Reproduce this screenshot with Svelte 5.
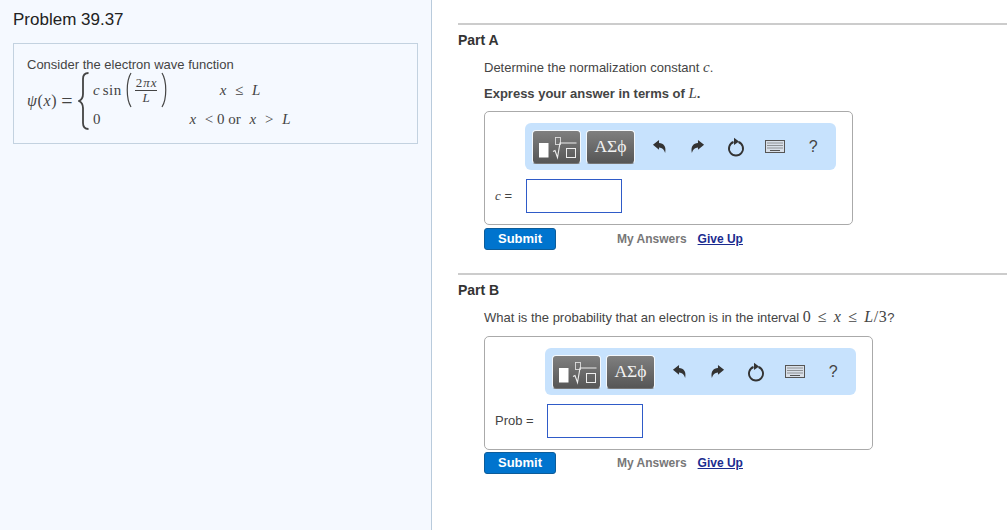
<script>
  const parts = [
    { name: 'Part A', label: 'c', italic: true, variant: 'part-a' },
    { name: 'Part B', label: 'Prob', italic: false, variant: 'part-b' }
  ];
</script>

{#snippet toolbar()}
  <div class="toolbar">
    <div class="tool-btn">
      <svg width="47" height="32" viewBox="0 0 47 32" fill="none">
        <rect x="6" y="12" width="9.5" height="14.5" fill="#fff" />
        <rect x="22.5" y="6.5" width="5" height="7" stroke="#ddd" stroke-width="0.9" />
        <path d="M20 20.5l2 -1 2.5 7 2.5 -14.5h16.5" stroke="#eee" stroke-width="1.1" />
        <rect x="33.5" y="17.5" width="9" height="9" stroke="#eee" />
      </svg>
    </div>
    <div class="tool-btn greek">ΑΣϕ</div>
    <div class="tool-icons">
      <svg width="15" height="15" viewBox="0 0 16 16">
        <path d="M1 6.2L7.5 1V4.2C12.5 4.5 15.5 8 14 15C13 11 11 9.2 7.5 9V11.5Z" fill="#333" />
      </svg>
      <svg width="15" height="15" viewBox="0 0 16 16">
        <path d="M15 6.2L8.5 1V4.2C3.5 4.5 0.5 8 2 15C3 11 5 9.2 8.5 9V11.5Z" fill="#333" />
      </svg>
      <svg width="18" height="20" viewBox="0 0 18 20" fill="none">
        <path d="M11.5 5A7 7 0 1 1 6.5 5" stroke="#333" stroke-width="1.9" />
        <path d="M7 0.8L12 4.4L7 8Z" fill="#333" />
      </svg>
      <svg width="20" height="13" viewBox="0 0 20 13">
        <rect x="0.5" y="0.5" width="19" height="12" fill="#d8dfe8" stroke="#555" />
        <path d="M2.5 3h15M2.5 5.5h15M2.5 8h15" stroke="#444" stroke-dasharray="1 1" />
        <path d="M5 10.5h10" stroke="#555" />
      </svg>
      <span class="help">?</span>
    </div>
  </div>
{/snippet}

<div class="page">
  <aside class="side">
    <h1>Problem 39.37</h1>
    <div class="intro">
      <p>Consider the electron wave function</p>
      <div class="math equation">
        <span class="lhs"><i>ψ</i>(<i>x</i>)<span class="eq">=</span></span>
        <svg class="brace" width="11" height="58" viewBox="0 0 11 58" fill="none">
          <path d="M10.5 1C6.5 1 5 3 5 7V22C5 26 3 28 1 29C3 30 5 32 5 36V51C5 55 6.5 57 10.5 57" stroke="#444" stroke-width="1.8" />
        </svg>
        <div class="cases">
          <div class="expr">
            <i>c</i><span class="sin">sin</span>
            <svg class="paren" width="8" height="36" viewBox="0 0 8 36" fill="none">
              <path d="M7 1C2 9 2 27 7 35" stroke="#444" stroke-width="1.2" />
            </svg>
            <span class="frac"><span class="num">2<i>πx</i></span><span class="den"><i>L</i></span></span>
            <svg class="paren" width="8" height="36" viewBox="0 0 8 36" fill="none">
              <path d="M1 1C6 9 6 27 1 35" stroke="#444" stroke-width="1.2" />
            </svg>
          </div>
          <div class="cond"><i>x</i> ≤ <i>L</i></div>
          <div class="zero">0</div>
          <div class="cond"><i>x</i> &lt; 0 or <i>x</i> &gt; <i>L</i></div>
        </div>
      </div>
    </div>
  </aside>

  <main class="main">
    {#each parts as part, i}
      <section class="part {part.variant}">
        <h2>{part.name}</h2>
        <div class="body">
          {#if i === 0}
            <p class="question">Determine the normalization constant <span class="math inline"><i>c</i></span>.</p>
            <p class="hint">Express your answer in terms of <span class="math inline"><i>L</i></span>.</p>
          {:else}
            <p class="question">What is the probability that an electron is in the interval <span class="math inline wide">0 ≤ <i>x</i> ≤ <i>L</i>/3</span>?</p>
          {/if}
          <div class="answer">
            {@render toolbar()}
            <div class="entry">
              <label for="answer-{i}">{#if part.italic}<i class="math">{part.label}</i>{:else}{part.label}{/if} =</label>
              <input id="answer-{i}" type="text" />
            </div>
          </div>
          <div class="actions">
            <button class="submit">Submit</button>
            <span class="my-answers">My Answers</span>
            <a href="#give-up" class="give-up">Give Up</a>
          </div>
        </div>
      </section>
    {/each}
  </main>
</div>

<style>
  :global(body) {
    margin: 0;
    background: #fff;
  }

  .page {
    display: flex;
    height: 530px;
    overflow: hidden;
    font-family: "Liberation Sans", Arial, sans-serif;
    font-size: 13px;
    color: #444;
  }

  .side {
    width: 432px;
    flex: none;
    box-sizing: border-box;
    padding: 11px 13px 0;
    background: #f5f9ff;
    border-right: 1px solid #b9cbdc;
  }

  h1 {
    margin: 0 0 15px;
    font-size: 17px;
    line-height: 17px;
    font-weight: normal;
    color: #222;
  }

  .intro {
    width: 405px;
    height: 101px;
    box-sizing: border-box;
    padding: 14px 13px 0;
    border: 1px solid #c3d2e0;
  }

  .intro p {
    margin: 0;
    line-height: 14px;
  }

  .math {
    font-family: "Liberation Serif", "Times New Roman", serif;
  }

  .equation {
    display: flex;
    align-items: center;
    font-size: 15px;
  }

  .lhs {
    display: flex;
    align-items: center;
    width: 51px;
    flex: none;
    white-space: nowrap;
    margin-top: -1px;
    font-size: 16px;
    letter-spacing: 0.6px;
  }

  .eq {
    margin-left: 4px;
    font-size: 20px;
    line-height: 1;
  }

  .brace {
    flex: none;
  }

  .cases {
    display: grid;
    grid-template-columns: 96px 102px;
    margin-left: 4px;
  }

  .expr {
    display: flex;
    align-items: center;
    height: 36px;
  }

  .sin {
    margin: 0 2px 0 3px;
    letter-spacing: 0.5px;
  }

  .frac {
    display: inline-flex;
    flex-direction: column;
    align-items: center;
    margin: 0 4px 0 3px;
    font-size: 13px;
    line-height: 12px;
  }

  .num {
    padding: 0 0 1px 1px;
    letter-spacing: 1px;
    border-bottom: 1px solid #444;
  }

  .den {
    padding-top: 1px;
  }

  .cond {
    display: flex;
    align-items: center;
    justify-content: center;
    gap: 5px;
    font-size: 15px;
    white-space: pre;
  }

  .zero {
    line-height: 22px;
  }

  .main {
    flex: 1;
    padding: 23px 0 0 26px;
  }

  .part {
    border-top: 2px solid #ccc;
  }

  h2 {
    margin: 0;
    padding-top: 7px;
    font-size: 14px;
    line-height: 16px;
    font-weight: bold;
    color: #333;
  }

  .body {
    padding-left: 26px;
  }

  .question {
    margin: 12px 0 0;
    font-size: 13px;
    line-height: 16px;
  }

  .part-b .question {
    margin-top: 11px;
  }

  .inline {
    font-size: 15px;
    line-height: 1;
    font-weight: normal;
  }

  .wide {
    font-size: 16px;
    word-spacing: 2px;
    letter-spacing: 0.6px;
  }

  .hint {
    margin: 10px 0 0;
    font-size: 13px;
    line-height: 16px;
    font-weight: bold;
  }

  .answer {
    box-sizing: border-box;
    height: 114px;
    margin-top: 9px;
    padding-top: 11px;
    border: 1px solid #aaa;
    border-radius: 5px;
    background: #fff;
  }

  .part-a .answer {
    width: 369px;
  }

  .part-b .answer {
    width: 389px;
    margin-top: 10px;
  }

  .toolbar {
    display: flex;
    align-items: center;
    width: 311px;
    height: 47px;
    box-sizing: border-box;
    margin-left: auto;
    margin-right: 16px;
    padding-left: 7px;
    gap: 5px;
    background: #c7e2fd;
    border-radius: 6px;
  }

  .tool-btn {
    display: flex;
    flex: none;
    align-items: center;
    justify-content: center;
    width: 49px;
    height: 34px;
    box-sizing: border-box;
    border: 1px solid #f4f8fc;
    border-bottom-color: #777;
    border-radius: 4px;
    background: linear-gradient(#7f7f7f, #565656);
  }

  .greek {
    font-family: "Liberation Serif", serif;
    font-size: 17.5px;
    color: #f2f2f2;
  }

  .tool-icons {
    display: grid;
    flex: none;
    grid-template-columns: repeat(5, 38.5px);
    align-items: center;
    justify-items: center;
  }

  .help {
    font-size: 16px;
    color: #444;
  }

  .entry {
    display: flex;
    align-items: center;
    gap: 13px;
    margin-top: 9px;
    padding-left: 10px;
  }

  .part-a .entry {
    gap: 14px;
  }

  .entry label {
    line-height: 14px;
  }

  .entry input {
    width: 96px;
    height: 34px;
    box-sizing: border-box;
    margin: 0;
    border: 1px solid #2f5bc8;
    border-radius: 0;
    background: #fff;
    outline: none;
  }

  .actions {
    display: flex;
    align-items: center;
    height: 22px;
    margin-top: 3px;
    font-size: 12px;
    font-weight: bold;
  }

  .part-b .actions {
    margin-top: 2px;
  }

  .submit {
    width: 72px;
    height: 22px;
    padding: 0 0 2px;
    font: bold 13px "Liberation Sans", Arial, sans-serif;
    color: #fff;
    background: #0074ce;
    border: 1px solid #0d5c99;
    border-radius: 3px;
  }

  .my-answers {
    margin-left: 61px;
    color: #777;
  }

  .give-up {
    margin-left: 11px;
    color: #1b2b8f;
    text-decoration: underline;
  }

  .part-a {
    height: 248px;
  }
</style>
